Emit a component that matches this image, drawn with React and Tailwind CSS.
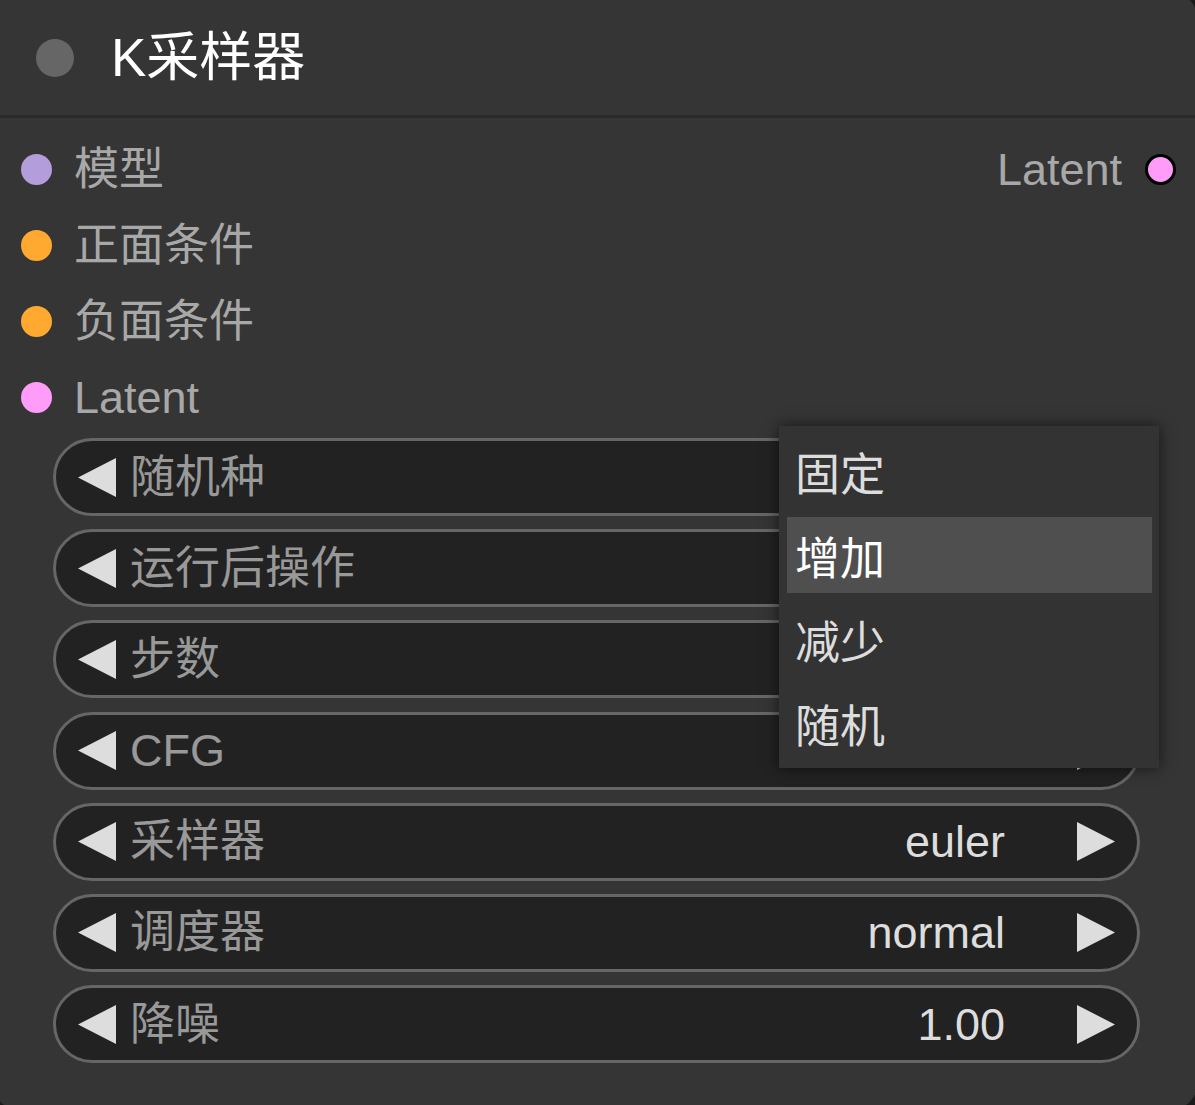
// K采样器 node with the seed-control dropdown open

const FONT = { fontFamily: '"Liberation Sans", "Noto Sans CJK SC", sans-serif' };

const INPUTS = [
  { label: '模型', color: '#b39ddb' },
  { label: '正面条件', color: '#ffa931' },
  { label: '负面条件', color: '#ffa931' },
  { label: 'Latent', color: '#ff9cf9' },
];

const WIDGETS = [
  { label: '随机种', value: '0' },
  { label: '运行后操作', value: '增加' },
  { label: '步数', value: '20' },
  { label: 'CFG', value: '8.0' },
  { label: '采样器', value: 'euler' },
  { label: '调度器', value: 'normal' },
  { label: '降噪', value: '1.00' },
];

const MENU = ['固定', '增加', '减少', '随机'];

export default function App() {
  return (
    <div className="relative w-[1195px] h-[1105px] overflow-hidden bg-[#1a1a1a]" style={FONT}>
      {/* ── Node body ─────────────────────────────────────────────── */}
      <div className="-mt-[8px] -ml-[8px] w-[1206px] h-[1118px] rounded-[28px] bg-[#353535] flex flex-col">

        {/* header */}
        <div className="flex items-center h-[126px] pt-[8px] pl-[8px] border-b-[3px] border-[#2a2a2a]">
          <span className="ml-[36px] w-[38px] h-[38px] rounded-full bg-[#666666] flex-shrink-0" />
          <span className="ml-[37px] text-white text-[53px] leading-none">K采样器</span>
        </div>

        {/* slots */}
        <div className="flex pt-[13px] pl-[8px] pr-[22px]">
          <div className="flex flex-col flex-1">
            {INPUTS.map(slot => (
              <div key={slot.label} className="flex items-center h-[76px]">
                <span
                  className="ml-[21px] w-[31px] h-[31px] rounded-full flex-shrink-0"
                  style={{ backgroundColor: slot.color }}
                />
                <span className="ml-[22px] text-[45px] leading-none text-[#a8a8a8]">{slot.label}</span>
              </div>
            ))}
          </div>
          <div className="flex items-center h-[76px]">
            <span className="text-[45px] leading-none text-[#a8a8a8]">Latent</span>
            <span className="ml-[23px] w-[31px] h-[31px] rounded-full bg-[#ff9cf9] border-[3px] border-black" />
          </div>
        </div>

        {/* widgets */}
        <div className="flex flex-col gap-[13.2px] mt-[3px] pl-[61px] pr-[58px]">
          {WIDGETS.map(w => (
            <Widget key={w.label} label={w.label} value={w.value} />
          ))}
        </div>
      </div>

      {/* ── Dropdown menu ─────────────────────────────────────────── */}
      <div className="absolute left-[779px] top-[426px] w-[380px] flex flex-col gap-[8px] py-[7px] pl-[8px] pr-[7px] bg-[#333333] shadow-[0_0_14px_rgba(0,0,0,0.6)]">
        {MENU.map(item => {
          const active = item === '增加';
          return (
            <div
              key={item}
              className={active
                ? 'h-[76px] flex items-center pt-[8px] pl-[8px] bg-[#4f4f4f] text-white text-[45px] leading-none'
                : 'h-[76px] flex items-center pt-[8px] pl-[8px] text-[#dddddd] text-[45px] leading-none'}
            >
              {item}
            </div>
          );
        })}
      </div>
    </div>
  );
}

function Arrow({ dir }) {
  return (
    <svg width="38" height="39" viewBox="0 0 38 39" className="flex-shrink-0">
      {dir === 'left'
        ? <polygon points="38,0 38,39 0,19.5" fill="#dddddd" />
        : <polygon points="0,0 0,39 38,19.5" fill="#dddddd" />}
    </svg>
  );
}

function Widget({ label, value }) {
  return (
    <div className="h-[78px] flex items-center rounded-full border-[3px] border-[#666666] bg-[#222222] pl-[22px] pr-[22px]">
      <Arrow dir="left" />
      <span className="ml-[14px] text-[45px] leading-none text-[#999999]">{label}</span>
      <span className="ml-auto text-[45px] leading-none text-[#dddddd]">{value}</span>
      <span className="ml-[72px]"><Arrow dir="right" /></span>
    </div>
  );
}
